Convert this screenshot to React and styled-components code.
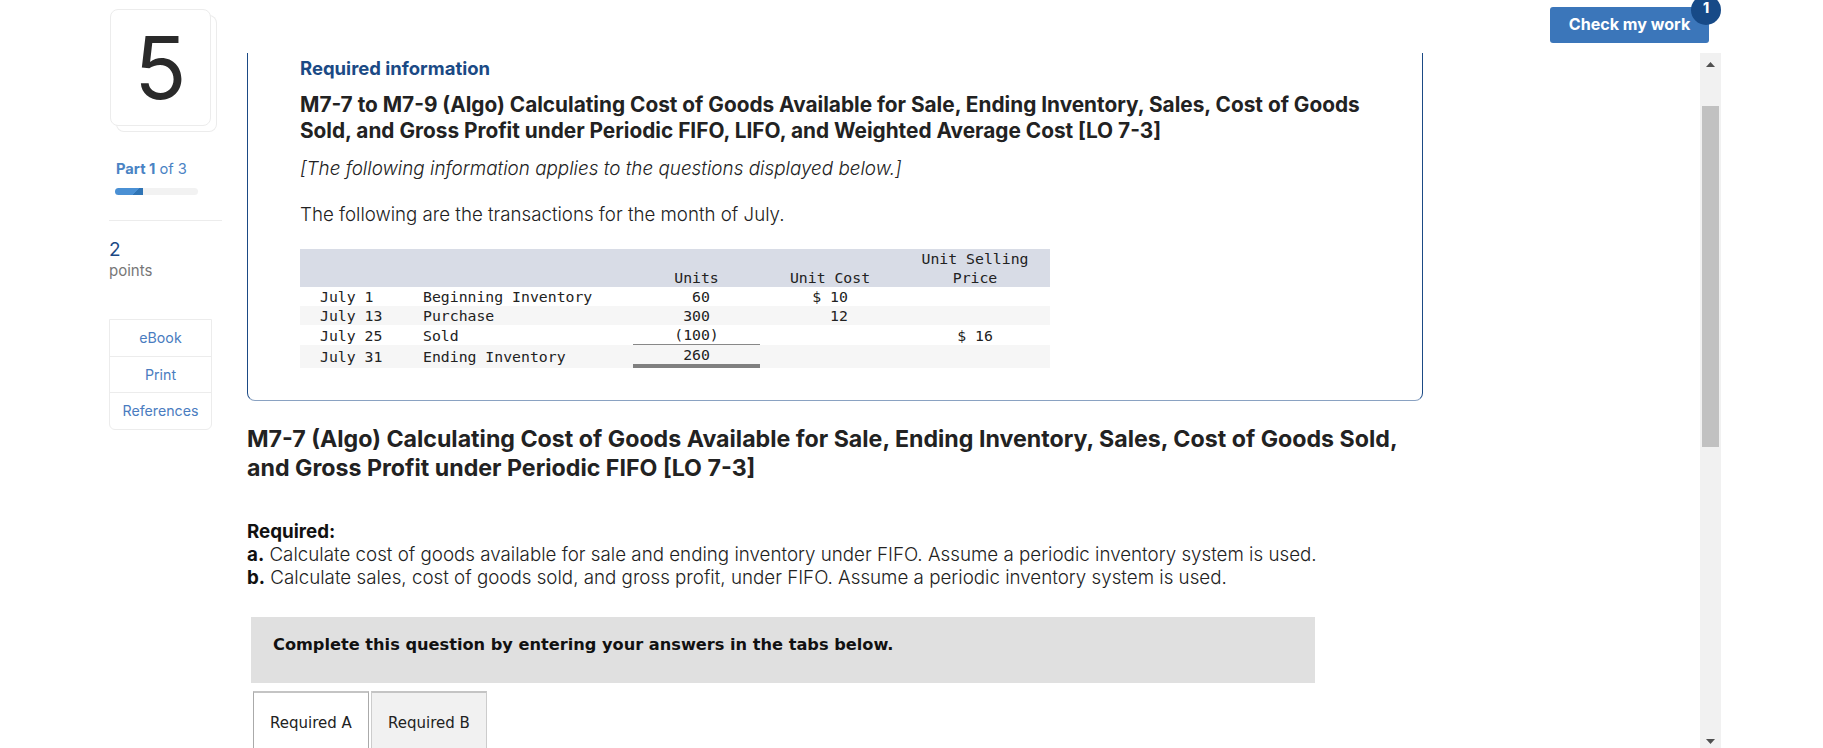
import React from "react";
import styled, { createGlobalStyle } from "styled-components";

const GlobalStyle = createGlobalStyle`
  html, body {
    margin: 0;
    padding: 0;
    background: #fff;
    overflow: hidden;
  }
  * {
    box-sizing: border-box;
  }
`;

const SANS = `Inter, "Open Sans", sans-serif`;
const MONO = `"DejaVu Sans Mono", monospace`;
const VERDANA = `"DejaVu Sans", sans-serif`;

const Page = styled.div`
  width: 1823px;
  height: 748px;
  overflow: hidden;
  display: flex;
  padding-left: 109px;
  font-family: ${SANS};
  color: #222;
`;

const Sidebar = styled.aside`
  width: 138px;
  flex: none;
  padding-top: 9px;
`;

const NumberCard = styled.div`
  position: relative;
  width: 101px;
  height: 117px;
  margin-left: 1px;
  background: #fff;
  border: 1px solid #ececec;
  border-radius: 8px;
  display: flex;
  align-items: center;
  justify-content: center;
  font-size: 86px;
  font-weight: 400;
  color: #2a2a2a;
  box-shadow: 6px 6px 0 -1px #fff, 6px 6px 0 0 #ececec;
`;

const PartLabel = styled.div`
  margin: 34px 0 0 7px;
  font-size: 14.7px;
  line-height: 18px;
  color: #4a83c4;
  b {
    font-weight: 700;
  }
`;

const Progress = styled.div`
  width: 83px;
  height: 7px;
  margin: 10px 0 0 6px;
  background: #f2f2f2;
  border-radius: 4px;
  overflow: hidden;
`;

const ProgressFill = styled.div`
  height: 100%;
  background: linear-gradient(135deg, #4a90d4 70%, #2f74b5 70%);
`;

const Divider = styled.hr`
  width: 113px;
  margin: 25px 0 0;
  border: 0;
  border-top: 1px solid #ececec;
`;

const Points = styled.div`
  margin-top: 18px;
  font-size: 19px;
  line-height: 22px;
  color: #1b4a85;
`;

const PointsLabel = styled.div`
  font-size: 15px;
  line-height: 20px;
  color: #777;
`;

const LinkList = styled.div`
  width: 103px;
  margin-top: 38px;
  border: 1px solid #ececec;
  border-radius: 0 0 6px 6px;
`;

const LinkItem = styled.div`
  height: ${({ $h }) => $h}px;
  padding-bottom: ${({ $lift }) => $lift || 0}px;
  display: flex;
  align-items: center;
  justify-content: center;
  font-size: 14.2px;
  color: #4a7cc0;
  & + & {
    border-top: 1px solid #ececec;
  }
`;

const Main = styled.main`
  width: 1474px;
  flex: none;
  display: flex;
  flex-direction: column;
  height: 748px;
`;

const TopBar = styled.div`
  height: 53px;
  flex: none;
  display: flex;
  justify-content: flex-end;
  align-items: flex-start;
  padding: 7px 12px 0 0;
`;

const CheckButton = styled.button`
  position: relative;
  width: 159px;
  height: 36px;
  background: #3b76ba;
  color: #fff;
  border: 0;
  border-radius: 3px;
  font-family: ${SANS};
  font-size: 16.1px;
  font-weight: 700;
  padding: 0 0 2px 0;
`;

const Badge = styled.span`
  position: absolute;
  top: -12px;
  right: -12px;
  width: 30px;
  height: 30px;
  border-radius: 50%;
  background: #174a87;
  color: #fff;
  font-size: 14px;
  font-weight: 800;
  display: flex;
  align-items: center;
  justify-content: center;
  padding-bottom: 5px;
  line-height: 16px;
`;

const ScrollArea = styled.div`
  flex: 1;
  display: flex;
  min-height: 0;
`;

const Content = styled.div`
  flex: 1;
  overflow: hidden;
`;

const InfoBox = styled.section`
  width: 1176px;
  height: 348px;
  padding: 4px 52px 0;
  border: 1px solid #1b4a85;
  border-top: 0;
  border-bottom-color: #8aa2c2;
  border-bottom-width: 1.5px;
  border-radius: 0 0 8px 8px;
`;

const InfoLabel = styled.div`
  font-size: 18.5px;
  line-height: 22px;
  font-weight: 700;
  color: #1b4a85;
`;

const InfoTitle = styled.h3`
  margin: 13px 0 0;
  font-size: 20.8px;
  line-height: 26px;
  font-weight: 700;
  color: #222;
`;

const InfoNote = styled.p`
  margin: 13px 0 0;
  font-size: 18.85px;
  line-height: 24px;
  font-style: italic;
  font-weight: 300;
`;

const InfoText = styled.p`
  margin: 22px 0 0;
  font-size: 18.7px;
  line-height: 24px;
  font-weight: 300;
`;

const DataTable = styled.table`
  width: 750px;
  margin-top: 22px;
  table-layout: fixed;
  border-collapse: separate;
  border-spacing: 0;
  font-family: ${MONO};
  font-size: 14.8px;
  line-height: 19px;
  color: #222;
`;

const HeadRow = styled.tr`
  background: #d8dce6;
  height: 38px;
`;

const HeadCell = styled.th`
  padding: 0;
  font-weight: 400;
  text-align: center;
  vertical-align: bottom;
`;

const Row = styled.tr`
  height: ${({ $h }) => $h}px;
  background: ${({ $alt }) => ($alt ? "#f6f6f6" : "#fff")};
`;

const Cell = styled.td`
  padding: 0 0 0 ${({ $pad }) => $pad || 0}px;
  white-space: pre;
  vertical-align: middle;
`;

const NumCell = styled.td`
  padding: 0;
  white-space: pre;
  text-align: center;
  vertical-align: ${({ $rule }) => ($rule ? "top" : "middle")};
  border-bottom: ${({ $rule }) =>
    $rule === "double" ? "4px solid #808080" : $rule === "single" ? "1.5px solid #888" : "0"};
`;

const Heading = styled.h2`
  width: 1176px;
  margin: 24px 0 0;
  font-size: 23.2px;
  line-height: 29px;
  font-weight: 700;
  color: #222;
`;

const Instructions = styled.div`
  margin-top: 37px;
  font-size: 18.76px;
  line-height: 23px;
  font-weight: 300;
  color: #222;
  b {
    font-weight: 700;
    color: #111;
  }
`;

const Banner = styled.div`
  width: 1064px;
  height: 66px;
  margin: 28px 0 0 4px;
  padding: 17px 0 0 22px;
  background: #e0e0e0;
  font-family: ${VERDANA};
  font-size: 16.2px;
  line-height: 22px;
  font-weight: 700;
  color: #111;
`;

const Tabs = styled.div`
  display: flex;
  gap: 2px;
  margin: 8px 0 0 6px;
`;

const Tab = styled.div`
  width: 116px;
  height: 70px;
  padding-top: 19px;
  text-align: center;
  font-family: ${VERDANA};
  font-size: 15px;
  line-height: 22px;
  color: #222;
  background: ${({ $active }) => ($active ? "#fff" : "#f1f1f1")};
  border: 1px solid ${({ $active }) => ($active ? "#aaa" : "#ccc")};
  border-top-width: 2px;
  border-top-color: #c4c4c4;
`;

const Scrollbar = styled.div`
  width: 21px;
  flex: none;
  height: 695px;
  background: #f1f1f1;
  display: flex;
  flex-direction: column;
  align-items: center;
  position: relative;
`;

const ScrollArrow = styled.svg`
  position: absolute;
  left: 6px;
  width: 9px;
  height: 5px;
  fill: #505050;
  top: ${({ $down }) => ($down ? "686px" : "9px")};
`;

const ScrollThumb = styled.div`
  width: 17px;
  height: 341px;
  margin-top: 53px;
  background: #c1c1c1;
`;

export default function App() {
  return (
    <Page>
      <GlobalStyle />
      <Sidebar>
        <NumberCard>5</NumberCard>
        <PartLabel>
          <b>Part 1</b> of 3
        </PartLabel>
        <Progress>
          <ProgressFill style={{ width: `${(1 / 3) * 100}%` }} />
        </Progress>
        <Divider />
        <Points>2</Points>
        <PointsLabel>points</PointsLabel>
        <LinkList>
          <LinkItem $h={36} $lift={2}>eBook</LinkItem>
          <LinkItem $h={36}>Print</LinkItem>
          <LinkItem $h={37} $lift={2}>References</LinkItem>
        </LinkList>
      </Sidebar>
      <Main>
        <TopBar>
          <CheckButton>
            Check my work
            <Badge>1</Badge>
          </CheckButton>
        </TopBar>
        <ScrollArea>
          <Content>
            <InfoBox>
              <InfoLabel>Required information</InfoLabel>
              <InfoTitle>
                M7-7 to M7-9 (Algo) Calculating Cost of Goods Available for Sale, Ending Inventory, Sales, Cost of Goods
                <br />
                Sold, and Gross Profit under Periodic FIFO, LIFO, and Weighted Average Cost [LO 7-3]
              </InfoTitle>
              <InfoNote>[The following information applies to the questions displayed below.]</InfoNote>
              <InfoText>The following are the transactions for the month of July.</InfoText>
              <DataTable>
                <colgroup>
                  <col style={{ width: 123 }} />
                  <col style={{ width: 210 }} />
                  <col style={{ width: 127 }} />
                  <col style={{ width: 140 }} />
                  <col style={{ width: 150 }} />
                </colgroup>
                <thead>
                  <HeadRow>
                    <HeadCell />
                    <HeadCell />
                    <HeadCell>Units</HeadCell>
                    <HeadCell>Unit Cost</HeadCell>
                    <HeadCell>
                      Unit Selling
                      <br />
                      Price
                    </HeadCell>
                  </HeadRow>
                </thead>
                <tbody>
                  <Row $h={19}>
                    <Cell $pad={20}>July 1</Cell>
                    <Cell>Beginning Inventory</Cell>
                    <NumCell> 60</NumCell>
                    <NumCell>$ 10</NumCell>
                    <NumCell />
                  </Row>
                  <Row $h={19} $alt>
                    <Cell $pad={20}>July 13</Cell>
                    <Cell>Purchase</Cell>
                    <NumCell>300</NumCell>
                    <NumCell>  12</NumCell>
                    <NumCell />
                  </Row>
                  <Row $h={20}>
                    <Cell $pad={20}>July 25</Cell>
                    <Cell>Sold</Cell>
                    <NumCell $rule="single">(100)</NumCell>
                    <NumCell />
                    <NumCell>$ 16</NumCell>
                  </Row>
                  <Row $h={22} $alt>
                    <Cell $pad={20}>July 31</Cell>
                    <Cell>Ending Inventory</Cell>
                    <NumCell $rule="double">260</NumCell>
                    <NumCell />
                    <NumCell />
                  </Row>
                </tbody>
              </DataTable>
            </InfoBox>
            <Heading>
              M7-7 (Algo) Calculating Cost of Goods Available for Sale, Ending Inventory, Sales, Cost of Goods Sold,
              <br />
              and Gross Profit under Periodic FIFO [LO 7-3]
            </Heading>
            <Instructions>
              <b>Required:</b>
              <br />
              <b>a.</b> Calculate cost of goods available for sale and ending inventory under FIFO. Assume a periodic inventory system is used.
              <br />
              <b>b.</b> Calculate sales, cost of goods sold, and gross profit, under FIFO. Assume a periodic inventory system is used.
            </Instructions>
            <Banner>Complete this question by entering your answers in the tabs below.</Banner>
            <Tabs>
              <Tab $active>Required A</Tab>
              <Tab>Required B</Tab>
            </Tabs>
          </Content>
          <Scrollbar>
            <ScrollArrow viewBox="0 0 9 5">
              <polygon points="4.5,0 9,5 0,5" />
            </ScrollArrow>
            <ScrollThumb />
            <ScrollArrow $down viewBox="0 0 9 5">
              <polygon points="0,0 9,0 4.5,5" />
            </ScrollArrow>
          </Scrollbar>
        </ScrollArea>
      </Main>
    </Page>
  );
}
